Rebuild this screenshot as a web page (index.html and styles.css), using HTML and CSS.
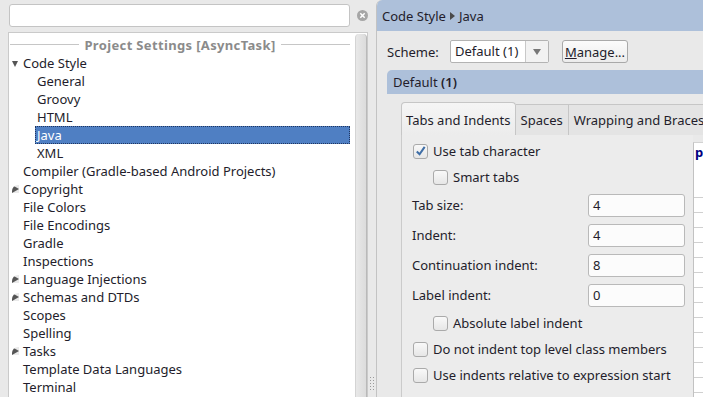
FILE: index.html
```html
<!DOCTYPE html>
<html lang="en">

<head>
    <meta charset="UTF-8">
    <title>Settings</title>
    <link rel="stylesheet" href="styles.css">
</head>

<body>
    <div class="app">
        <aside class="left">
            <div class="search-row">
                <input class="search" type="text">
                <span class="clear">
                    <svg width="11" height="11" viewBox="0 0 11 11">
                        <circle cx="5.5" cy="5.5" r="5.5" fill="#a6a6a6"/>
                        <path d="M3.3 3.3 L7.7 7.7 M7.7 3.3 L3.3 7.7" stroke="#fff" stroke-width="1.5"/>
                    </svg>
                </span>
            </div>
            <div class="tree-box">
                <div class="tree">
                    <div class="tree-title"><span>Project Settings [AsyncTask]</span></div>
                    <div class="node"><span class="arrow down"></span>Code Style</div>
                    <div class="node child">General</div>
                    <div class="node child">Groovy</div>
                    <div class="node child">HTML</div>
                    <div class="node child selected">Java</div>
                    <div class="node child">XML</div>
                    <div class="node">Compiler (Gradle-based Android Projects)</div>
                    <div class="node"><span class="arrow right"></span>Copyright</div>
                    <div class="node">File Colors</div>
                    <div class="node">File Encodings</div>
                    <div class="node">Gradle</div>
                    <div class="node">Inspections</div>
                    <div class="node"><span class="arrow right"></span>Language Injections</div>
                    <div class="node"><span class="arrow right"></span>Schemas and DTDs</div>
                    <div class="node">Scopes</div>
                    <div class="node">Spelling</div>
                    <div class="node"><span class="arrow right"></span>Tasks</div>
                    <div class="node">Template Data Languages</div>
                    <div class="node">Terminal</div>
                </div>
                <div class="vscroll"></div>
            </div>
        </aside>

        <div class="splitter"><span class="grip"></span></div>

        <main class="right">
            <div class="crumb">Code Style <span class="crumb-sep"></span> Java</div>

            <div class="scheme-row">
                <span class="scheme-label">Scheme:</span>
                <div class="combo">
                    <span class="combo-value">Default (1)</span>
                    <span class="combo-btn"><span class="tri"></span></span>
                </div>
                <button class="manage"><u>M</u>anage...</button>
            </div>

            <div class="scheme-bar">Default <b>(1)</b></div>

            <div class="tabs">
                <div class="tab active">Tabs and Indents</div>
                <div class="tab">Spaces</div>
                <div class="tab">Wrapping and Braces</div>
            </div>

            <div class="tab-body">
                <div class="options">
                    <label class="check-row">
                        <span class="box checked">
                            <svg width="14" height="14" viewBox="0 0 14 14"><path d="M3 7.5 L6 10.5 L11.5 2.5" fill="none" stroke="#3f6ea6" stroke-width="2.2"/></svg>
                        </span>
                        Use tab character
                    </label>
                    <label class="check-row nested"><span class="box"></span>Smart tabs</label>
                    <div class="field-row"><span>Tab size:</span><span class="field">4</span></div>
                    <div class="field-row"><span>Indent:</span><span class="field">4</span></div>
                    <div class="field-row"><span>Continuation indent:</span><span class="field">8</span></div>
                    <div class="field-row"><span>Label indent:</span><span class="field">0</span></div>
                    <label class="check-row nested"><span class="box"></span>Absolute label indent</label>
                    <label class="check-row"><span class="box"></span>Do not indent top level class members</label>
                    <label class="check-row"><span class="box"></span>Use indents relative to expression start</label>
                </div>
                <div class="preview"><b>pu</b></div>
            </div>
        </main>
    </div>
</body>

</html>
```

FILE: styles.css
```css
* {
    box-sizing: border-box;
    margin: 0;
    padding: 0;
}

body {
    font-family: "Noto Sans", Arial, sans-serif;
    font-size: 13px;
    color: #231d2b;
    background-color: #e9e9e9;
    width: 703px;
    height: 397px;
    overflow: hidden;
}

.app {
    display: flex;
    height: 397px;
}

/* left side: search + tree */

.left {
    width: 368px;
    flex-shrink: 0;
    display: flex;
    flex-direction: column;
    padding: 4px 0 0 8px;
}

.search-row {
    display: flex;
    align-items: center;
    height: 23px;
}

.search {
    width: 342px;
    height: 23px;
    margin-left: 1px;
    border: 1px solid #c4c4c4;
    border-radius: 3px;
    background-color: #fff;
}

.clear {
    display: flex;
    margin-left: 7px;
}

.tree-box {
    flex-grow: 1;
    display: flex;
    margin-top: 5px;
    background-color: #fff;
    border: 1px solid #cacaca;
    border-bottom: none;
}

.tree {
    flex-grow: 1;
    padding-top: 2px;
}

.tree-title {
    display: flex;
    align-items: center;
    gap: 5px;
    height: 19px;
    padding: 0 5px 0 1px;
    color: #8b8b8b;
    font-weight: bold;
    letter-spacing: 0.35px;
}

.tree-title::before,
.tree-title::after {
    content: "";
    flex-grow: 1;
    height: 1px;
    background-color: #c6c6c6;
}

.node {
    position: relative;
    height: 18px;
    line-height: 18px;
    padding-left: 14px;
    white-space: nowrap;
}

.node.child {
    margin-left: 26px;
    margin-right: 5px;
    padding-left: 2px;
}

.node.selected {
    background-color: #4f7fc3;
    color: #fff;
    outline: 1px dotted #1f3560;
    outline-offset: -1px;
}

.arrow {
    position: absolute;
    left: 3px;
    top: 5px;
    width: 0;
    height: 0;
}

.arrow.down {
    top: 7px;
    border-left: 3.5px solid transparent;
    border-right: 3.5px solid transparent;
    border-top: 6px solid #555;
}

.arrow.right {
    border-top: 4px solid transparent;
    border-bottom: 4px solid transparent;
    border-left: 7px solid #555;
}

.vscroll {
    width: 12px;
    margin-top: 1px;
    border-left: 1px solid #d4d4d4;
    border-right: 1px solid #b9b9b9;
    background: linear-gradient(to right, #e8e8e8, #dcdcdc);
    border-top-left-radius: 4px;
    border-top-right-radius: 4px;
}

.splitter {
    width: 8px;
    flex-shrink: 0;
    display: flex;
    align-items: flex-end;
    padding: 0 0 7px 1px;
}

.grip {
    width: 5px;
    height: 14px;
    background-image: radial-gradient(circle, #9a9a9a 0.8px, transparent 1px);
    background-size: 3px 3px;
}

/* right side */

.right {
    flex-grow: 1;
    min-width: 0;
    display: flex;
    flex-direction: column;
    border-left: 1px solid #c3c3c3;
    border-top-left-radius: 6px;
    background-color: #e9e9e9;
    overflow: hidden;
}

.crumb {
    height: 31px;
    display: flex;
    align-items: center;
    gap: 4px;
    padding-left: 5px;
    background-color: #adc0da;
    border-top-left-radius: 5px;
}

.crumb-sep {
    width: 0;
    height: 0;
    border-top: 4px solid transparent;
    border-bottom: 4px solid transparent;
    border-left: 5px solid #4a4a4a;
}

.scheme-row {
    display: flex;
    align-items: center;
    height: 23px;
    margin-top: 9px;
    padding-left: 10px;
}

.scheme-label {
    width: 63px;
}

.combo {
    display: flex;
    width: 99px;
    height: 23px;
    border: 1px solid #b3b3b3;
    border-radius: 2px;
    background-color: #fff;
}

.combo-value {
    flex-grow: 1;
    padding-left: 4px;
    line-height: 21px;
}

.combo-btn {
    width: 23px;
    display: flex;
    align-items: center;
    justify-content: center;
    border-left: 1px solid #c8c8c8;
    background-color: #f2f2f2;
}

.tri {
    border-left: 4px solid transparent;
    border-right: 4px solid transparent;
    border-top: 6px solid #777;
}

.manage {
    margin-left: 13px;
    width: 66px;
    height: 23px;
    font: inherit;
    color: inherit;
    border: 1px solid #a9a9a9;
    border-radius: 3px;
    background: linear-gradient(#fbfbfb, #ececec);
}

.manage u {
    text-decoration-thickness: 1px;
}

.scheme-bar {
    height: 24px;
    margin: 7px 0 0 10px;
    padding-left: 6px;
    line-height: 24px;
    background-color: #adc0da;
    border-top-left-radius: 5px;
}

.scheme-bar b {
    font-weight: 600;
}

.tabs {
    display: flex;
    align-items: flex-end;
    height: 33px;
    margin: 8px 0 0 24px;
    overflow: hidden;
}

.tab {
    height: 31px;
    line-height: 31px;
    padding: 0 5px;
    border: 1px solid #c6c6c6;
    border-bottom: none;
    border-left: none;
    background-color: #e4e4e4;
    white-space: nowrap;
}

.tab.active {
    height: 33px;
    line-height: 35px;
    padding: 0 4px;
    border-left: 1px solid #c6c6c6;
    border-radius: 4px 4px 0 0;
    background: linear-gradient(#f5f5f5, #ececec);
}

.tab-body {
    flex-grow: 1;
    display: flex;
    margin-left: 24px;
}

.options {
    width: 292px;
    flex-shrink: 0;
    padding-top: 3px;
    border-left: 1px solid #cbcbcb;
    background-color: #ececec;
}

.check-row {
    display: flex;
    align-items: center;
    gap: 5px;
    height: 26px;
    padding-left: 11px;
}

.check-row.nested {
    padding-left: 31px;
}

.box {
    width: 15px;
    height: 15px;
    border: 1px solid #aaa;
    border-radius: 3px;
    background: linear-gradient(#f9f9f9, #e6e6e6);
    display: flex;
    align-items: center;
    justify-content: center;
}

.field-row {
    display: flex;
    align-items: center;
    justify-content: space-between;
    height: 30px;
    padding: 0 8px 0 10px;
}

.field {
    width: 97px;
    height: 23px;
    padding-left: 4px;
    line-height: 21px;
    border: 1px solid #b9b9b9;
    border-radius: 3px;
    background-color: #fcfcfc;
}

.preview {
    flex-grow: 1;
    min-width: 0;
    overflow: hidden;
    white-space: nowrap;
    margin-top: 7px;
    padding: 1px 0 0 1px;
    border-left: 1px solid #c2c2c2;
    border-top: 1px solid #d2d2d2;
    color: #00007f;
    background-color: #fff;
    background-image: repeating-linear-gradient(to bottom, transparent 0, transparent 14px, #d0d0d0 14px, #d0d0d0 15px);
    background-position: 0 40px;
    background-repeat: repeat-x;
    line-height: 16px;
}
```
